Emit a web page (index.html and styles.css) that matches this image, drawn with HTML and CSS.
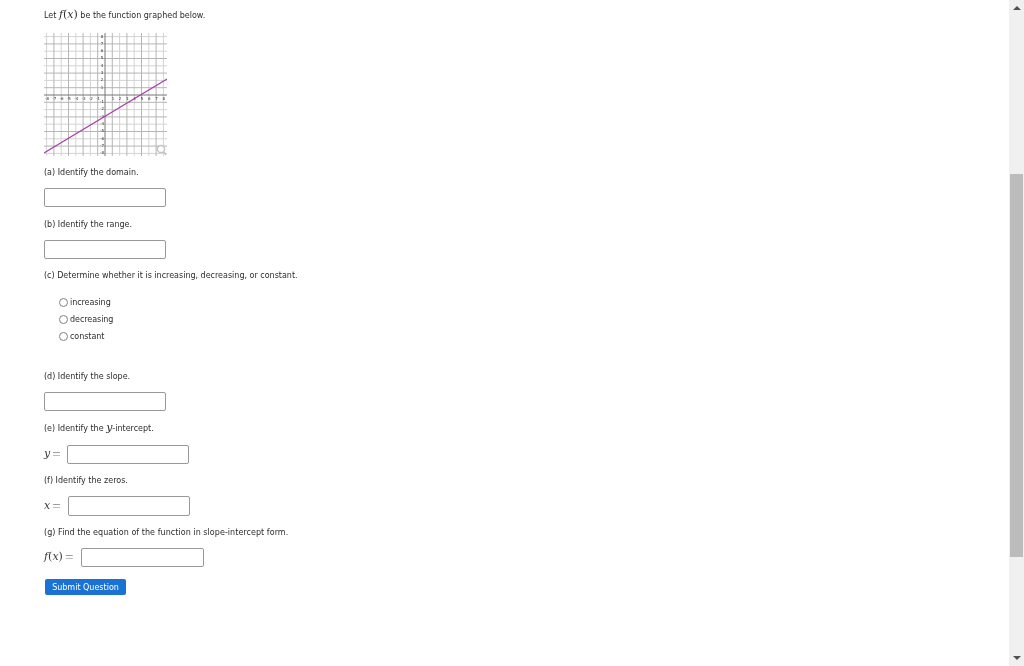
FILE: index.html
```html
<!DOCTYPE html>
<html lang="en">
<head>
<meta charset="utf-8">
<title>Function question</title>
<link rel="stylesheet" href="styles.css">
</head>
<body>
<div class="page">
  <main class="content">
    <p class="prompt intro">Let <span class="math">f</span><span class="mathup">(</span><span class="math">x</span><span class="mathup">)</span> be the function graphed below.</p>
    <svg class="graph" viewBox="44 33 123 123" width="123" height="123" aria-label="Graph of f(x)">
      <path class="grid-minor" d="M46.6 33V156M61.2 33V156M75.8 33V156M90.4 33V156M119.6 33V156M134.2 33V156M148.8 33V156M163.4 33V156M44 36.6H167M44 51.2H167M44 65.8H167M44 80.4H167M44 109.6H167M44 124.2H167M44 138.8H167M44 153.4H167"/>
      <path class="grid-major" d="M53.9 33V156M68.5 33V156M83.1 33V156M97.7 33V156M112.3 33V156M126.9 33V156M141.5 33V156M156.1 33V156M44 43.9H167M44 58.5H167M44 73.1H167M44 87.7H167M44 102.3H167M44 116.9H167M44 131.5H167M44 146.1H167"/>
      <path class="axis" d="M105 33V156M44 95H167"/>
      <g class="ticks-x">
        <text x="47" y="99.5">-8</text><text x="54.3" y="99.5">-7</text><text x="61.6" y="99.5">-6</text><text x="68.9" y="99.5">-5</text><text x="76.2" y="99.5">-4</text><text x="83.5" y="99.5">-3</text><text x="90.8" y="99.5">-2</text><text x="98.1" y="99.5">-1</text>
        <text x="113" y="99.5">1</text><text x="120" y="99.5">2</text><text x="127.3" y="99.5">3</text><text x="134.6" y="99.5">4</text><text x="141.9" y="99.5">5</text><text x="149.2" y="99.5">6</text><text x="156.5" y="99.5">7</text><text x="163.8" y="99.5">8</text>
      </g>
      <g class="ticks-y">
        <text x="102" y="37.5">8</text><text x="102" y="44.8">7</text><text x="102" y="52.1">6</text><text x="102" y="59.4">5</text><text x="102" y="66.7">4</text><text x="102" y="74">3</text><text x="102" y="81.3">2</text><text x="102" y="88.6">1</text>
        <text x="102" y="103">-1</text><text x="102" y="110.3">-2</text><text x="102" y="117.6">-3</text><text x="102" y="124.9">-4</text><text x="102" y="132.2">-5</text><text x="102" y="139.5">-6</text><text x="102" y="146.8">-7</text><text x="102" y="154.1">-8</text>
      </g>
      <path class="fn" d="M44 153L167 79"/>
      <g class="zoom-icon"><circle cx="161" cy="149" r="3.6"/><path d="M163.6 151.8L166 155"/></g>
    </svg>

    <p class="prompt p-a">(a) Identify the domain.</p>
    <input class="answer a-gap" type="text" aria-label="domain">

    <p class="prompt p-b">(b) Identify the range.</p>
    <input class="answer a-gap" type="text" aria-label="range">

    <p class="prompt p-c">(c) Determine whether it is increasing, decreasing, or constant.</p>
    <div class="choices">
      <label class="choice"><input class="radio" type="radio" name="trend">increasing</label>
      <label class="choice"><input class="radio" type="radio" name="trend">decreasing</label>
      <label class="choice"><input class="radio" type="radio" name="trend">constant</label>
    </div>

    <p class="prompt p-d">(d) Identify the slope.</p>
    <input class="answer a-gap" type="text" aria-label="slope">

    <p class="prompt p-e">(e) Identify the <span class="math">y</span>-intercept.</p>
    <div class="eq eq-y"><span class="lhs"><span class="math">y</span><span class="eqsign">=</span></span><input class="answer" type="text" aria-label="y"></div>

    <p class="prompt p-f">(f) Identify the zeros.</p>
    <div class="eq eq-x"><span class="lhs"><span class="math">x</span><span class="eqsign">=</span></span><input class="answer tall" type="text" aria-label="x"></div>

    <p class="prompt p-g">(g) Find the equation of the function in slope-intercept form.</p>
    <div class="eq eq-f"><span class="lhs"><span class="math">f</span><span class="mathup">(</span><span class="math">x</span><span class="mathup">)</span><span class="eqsign">=</span></span><input class="answer wide" type="text" aria-label="f(x)"></div>

    <button class="submit" type="button">Submit Question</button>
  </main>
  <aside class="scrollbar">
    <div class="arrow arrow-up"></div>
    <div class="thumb"></div>
    <div class="arrow arrow-down"></div>
  </aside>
</div>
</body>
</html>
```
FILE: styles.css
```css
html, body { margin: 0; padding: 0; height: 100%; overflow: hidden; background: #fff; }
body { font-family: "DejaVu Sans", Verdana, sans-serif; font-size: 8px; color: #2c2c2c; }
.page { display: flex; height: 666px; }
.content { flex: 1; padding: 9px 0 0 44px; min-width: 0; filter: blur(0.3px); }
.prompt { margin: 0; height: 12px; line-height: 14px; white-space: nowrap; }
.math { font-family: "DejaVu Serif", serif; font-style: italic; font-size: 11px; line-height: 0; }
.mathup { font-family: "DejaVu Serif", serif; font-size: 11px; line-height: 0; }
.eqsign { font-family: "Liberation Serif", serif; font-size: 15px; line-height: 0; color: #808080; margin-left: 2px; vertical-align: -2px; }
.graph { display: block; margin-top: 12px; }
.grid-minor { stroke: #d4d4d4; stroke-width: 1; fill: none; }
.grid-major { stroke: #b6b6b6; stroke-width: 1; fill: none; }
.axis { stroke: #777; stroke-width: 1; fill: none; }
.fn { stroke: #a83fac; stroke-width: 1.2; fill: none; }
.ticks-x text, .ticks-y text { font-size: 4px; fill: #333; text-anchor: middle; }
.zoom-icon { fill: #fff; stroke: #c4c4c4; stroke-width: 1.5; }
.p-a { margin-top: 10px; }
.p-b { margin-top: 11px; }
.p-c { margin-top: 10px; }
.p-d { margin-top: 25px; }
.p-e { margin-top: 11px; }
.p-f { margin-top: 10px; }
.p-g { margin-top: 10px; letter-spacing: 0.05px; }
.answer { display: block; box-sizing: border-box; width: 122px; height: 19px; margin: 0; padding: 0 4px; border: 1px solid #989898; border-radius: 2px; background: #fff; }
.answer.tall { height: 20px; }
.answer.wide { width: 123px; }
.a-gap { margin-top: 10px; }
.choices { margin-top: 13px; padding-left: 15px; }
.choice { display: flex; align-items: center; height: 17px; letter-spacing: -0.05px; }
.radio { appearance: none; box-sizing: border-box; width: 9px; height: 9px; margin: 0 2px 0 0; border: 1px solid #808080; border-radius: 50%; background: #fff; }
.eq { display: flex; align-items: center; margin-top: 11px; }
.eq-x, .eq-f { margin-top: 10px; }
.lhs { color: #3a3a3a; white-space: nowrap; }
.eq-y .lhs { width: 23px; }
.eq-x .lhs { width: 24px; }
.eq-f .lhs { width: 37px; }
.submit { display: block; box-sizing: border-box; width: 81px; height: 16px; margin: 12px 0 0 1px; padding: 0; border: 0; border-radius: 2px; background: #1a73d4; color: #fff; font-family: "DejaVu Sans", Verdana, sans-serif; font-size: 8px; }
.scrollbar { flex: none; width: 15px; display: flex; flex-direction: column; align-items: center; background: #f0f0f0; }
.arrow { flex: none; width: 0; height: 0; border-left: 4px solid transparent; border-right: 4px solid transparent; }
.arrow-up { margin-top: 6px; border-bottom: 4px solid #505050; }
.thumb { flex: none; width: 13px; height: 383px; margin-top: 164px; background: #bcbcbc; }
.arrow-down { margin-top: auto; margin-bottom: 6px; border-top: 4px solid #505050; }
```
